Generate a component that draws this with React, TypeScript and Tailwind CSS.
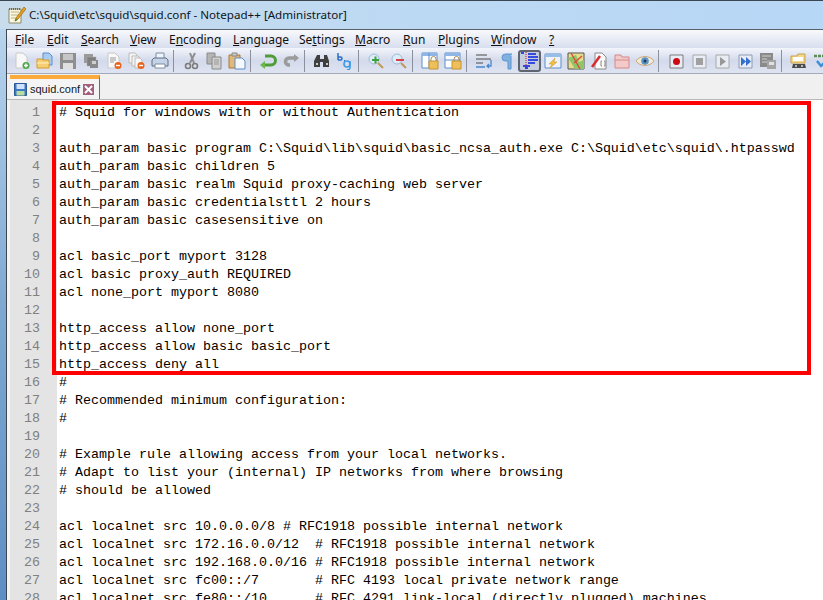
import React from 'react';

const menus: [string, string, string][] = [
  ['', 'F', 'ile'],
  ['', 'E', 'dit'],
  ['', 'S', 'earch'],
  ['', 'V', 'iew'],
  ['E', 'n', 'coding'],
  ['', 'L', 'anguage'],
  ['Se', 't', 'tings'],
  ['', 'M', 'acro'],
  ['', 'R', 'un'],
  ['', 'P', 'lugins'],
  ['', 'W', 'indow'],
  ['', '?', ''],
];

const menuWidths = [
  'w-[32px]', 'w-[34px]', 'w-[49px]', 'w-[39px]', 'w-[64px]', 'w-[66px]',
  'w-[56px]', 'w-[48px]', 'w-[35px]', 'w-[53px]', 'w-[58px]', 'w-[16px]',
];

const lines = [
  '# Squid for windows with or without Authentication',
  '',
  'auth_param basic program C:\\Squid\\lib\\squid\\basic_ncsa_auth.exe C:\\Squid\\etc\\squid\\.htpasswd',
  'auth_param basic children 5',
  'auth_param basic realm Squid proxy-caching web server',
  'auth_param basic credentialsttl 2 hours',
  'auth_param basic casesensitive on',
  '',
  'acl basic_port myport 3128',
  'acl basic proxy_auth REQUIRED',
  'acl none_port myport 8080',
  '',
  'http_access allow none_port',
  'http_access allow basic basic_port',
  'http_access deny all',
  '#',
  '# Recommended minimum configuration:',
  '#',
  '',
  '# Example rule allowing access from your local networks.',
  '# Adapt to list your (internal) IP networks from where browsing',
  '# should be allowed',
  '',
  'acl localnet src 10.0.0.0/8 # RFC1918 possible internal network',
  'acl localnet src 172.16.0.0/12  # RFC1918 possible internal network',
  'acl localnet src 192.168.0.0/16 # RFC1918 possible internal network',
  'acl localnet src fc00::/7       # RFC 4193 local private network range',
  'acl localnet src fe80::/10      # RFC 4291 link-local (directly plugged) machines',
];

const Ico = ({ children }: { children: React.ReactNode }) => (
  <div className="w-[23px] h-[22px] flex items-center justify-center shrink-0">
    <svg width="18" height="18" viewBox="0 0 18 18" fill="none">{children}</svg>
  </div>
);

const Sep = () => <div className="ml-[2px] mr-[5px] w-px h-[22px] bg-[#8b919c] shrink-0" />;

const Page = () => <path d="M3 1h7l4 4v11H3z" fill="#f8f8f8" stroke="#c8c8c8" />;
const Minus = () => (
  <>
    <circle cx="13" cy="13.5" r="3.5" fill="#e8641c" />
    <path d="M11 13.5h4" stroke="#fff" strokeWidth="1.4" />
  </>
);

const Toolbar = () => (
  <div className="h-[26px] flex items-center pl-[3px] bg-gradient-to-b from-[#f3f5fb] via-[#d3daeb] to-[#dfe4f2] border-b border-[#a3abbb] shrink-0">
    {/* new */}
    <Ico>
      <Page />
      <circle cx="13" cy="13.5" r="3.5" fill="#4ea64a" />
      <path d="M11 13.5h4M13 11.5v4" stroke="#fff" strokeWidth="1.3" />
    </Ico>
    {/* open */}
    <Ico>
      <path d="M7 1h6l3 3v9H7z" fill="#a9cdf0" stroke="#5b8ec8" />
      <path d="M1 7h5l1 1h6v8H1z" fill="#f6cf72" stroke="#d99a2e" />
      <path d="M1 11h12" stroke="#fff1c4" />
    </Ico>
    {/* save */}
    <Ico>
      <path d="M1 1h16v16H1z" fill="#8f8f8f" />
      <path d="M4 2h10v6H4z" fill="#c6c6c6" />
      <path d="M4 11h10v6H4z" fill="#e0e0e0" />
    </Ico>
    {/* save all */}
    <Ico>
      <path d="M2 2h9v9H2z" fill="#9a9a9a" />
      <path d="M5 5h9v9H5z" fill="#7f7f7f" stroke="#aaa" strokeWidth="0.5" />
      <path d="M8 8h8v8H8z" fill="#8a8a8a" />
      <path d="M10 9h4v3h-4z" fill="#d0d0d0" />
    </Ico>
    {/* close */}
    <Ico>
      <Page />
      <path d="M5 6h6M5 8h6M5 10h4" stroke="#999" />
      <Minus />
    </Ico>
    {/* close all */}
    <Ico>
      <path d="M1 1h6l2 2v8H1z" fill="#f4f4f4" stroke="#bbb" />
      <path d="M4 4h6l2 2v8H4z" fill="#f4f4f4" stroke="#bbb" />
      <path d="M7 6h5l2 2v8H7z" fill="#f8f8f8" stroke="#bbb" />
      <Minus />
    </Ico>
    {/* print */}
    <Ico>
      <path d="M5 1h8v6H5z" fill="#eef4fb" stroke="#7d8ea6" />
      <path d="M1 8l2-2h12l2 2v6H1z" fill="#c4d3e6" stroke="#5f6f86" />
      <path d="M4 12h10v4H4z" fill="#fff" stroke="#7d8ea6" />
    </Ico>
    <Sep />
    {/* cut */}
    <Ico>
      <path d="M12 1L7 11M7 1l4 10" stroke="#8f8f8f" strokeWidth="2" transform="translate(1 0)" />
      <circle cx="6" cy="14" r="2.5" stroke="#7c7c7c" strokeWidth="1.6" />
      <circle cx="13" cy="14" r="2.5" stroke="#7c7c7c" strokeWidth="1.6" />
    </Ico>
    {/* copy */}
    <Ico>
      <path d="M2 1h8v11H2z" fill="#b5b5b5" stroke="#8a8a8a" />
      <path d="M7 5h9v12H7z" fill="#cfcfcf" stroke="#8a8a8a" />
      <path d="M9 8h5M9 10h5M9 12h5" stroke="#9a9a9a" />
    </Ico>
    {/* paste */}
    <Ico>
      <path d="M1 3h11v13H1z" fill="#e2b778" stroke="#a97b3a" />
      <path d="M4 1h5v3H4z" fill="#c8c8c8" stroke="#888" />
      <path d="M7 6h7l3 3v8H7z" fill="#f4f8fd" stroke="#5b8ec8" />
    </Ico>
    <Sep />
    {/* undo */}
    <Ico>
      <path d="M6 4h6a3.500 3.500 0 0 1 0 9H4" stroke="#4f9c38" strokeWidth="3" />
      <path d="M1 13l5-4v8z" fill="#6ab84a" />
    </Ico>
    {/* redo */}
    <Ico>
      <path d="M15 6H7a3.500 3.500 0 0 0 0 7h1" stroke="#9b9b9b" strokeWidth="3.500" />
      <path d="M17 6l-5-4v8z" fill="#9b9b9b" />
    </Ico>
    <Sep />
    {/* find */}
    <Ico>
      <path d="M4 3h3v4h4V3h3l2 6v6h-6V10H7v5H1V9z" fill="#3f3f3f" />
      <path d="M3 11h2v2H3zM13 11h2v2h-2z" fill="#c9c9c9" />
    </Ico>
    {/* replace */}
    <Ico>
      <path d="M2 1v7M2 5h2.500a1.500 1.500 0 0 1 0 3H2" stroke="#2a6fc4" strokeWidth="1.500" />
      <path d="M8 8l2 2" stroke="#2a6fc4" />
      <circle cx="11" cy="12" r="3" stroke="#3d9be8" strokeWidth="1.600" />
      <path d="M14 9v7a2 2 0 0 1-3 1.500" stroke="#3d9be8" strokeWidth="1.500" />
    </Ico>
    <Sep />
    {/* zoom in */}
    <Ico>
      <circle cx="7" cy="7" r="5" fill="#dcecf8" stroke="#9cbcd8" />
      <path d="M11 11l5 5" stroke="#c09858" strokeWidth="2" />
      <path d="M5 8h7M8.500 4.500v7" stroke="#3fa040" strokeWidth="2" />
    </Ico>
    {/* zoom out */}
    <Ico>
      <circle cx="7" cy="7" r="5" fill="#dcecf8" stroke="#9cbcd8" />
      <path d="M11 11l5 5" stroke="#c09858" strokeWidth="2" />
      <path d="M6 8h8" stroke="#d8404a" strokeWidth="2" />
    </Ico>
    <Sep />
    {/* sync vertical */}
    <Ico>
      <path d="M1 1h15v15H1z" fill="#fff" stroke="#5b8ec8" />
      <path d="M1 1h15v3H1z" fill="#8fb6e6" />
      <path d="M8 1v15" stroke="#5b8ec8" />
      <path d="M8 9h9v8H8z" fill="#eec05c" stroke="#c8922c" />
      <path d="M10 9V7a2.500 2.500 0 0 1 5 0v2" stroke="#a88a50" />
    </Ico>
    {/* sync horizontal */}
    <Ico>
      <path d="M1 1h15v15H1z" fill="#fff" stroke="#5b8ec8" />
      <path d="M1 1h15v3H1z" fill="#8fb6e6" />
      <path d="M1 8h15" stroke="#5b8ec8" />
      <path d="M8 9h9v8H8z" fill="#eec05c" stroke="#c8922c" />
      <path d="M10 9V7a2.500 2.500 0 0 1 5 0v2" stroke="#a88a50" />
    </Ico>
    <Sep />
    {/* word wrap */}
    <Ico>
      <path d="M1 3h11M1 7h15M1 11h7" stroke="#4a4a4a" strokeWidth="1.200" />
      <path d="M1 15h9" stroke="#6a9ed8" strokeWidth="2" />
      <path d="M16 8v6h-4M14 12l-2 2 2 2" stroke="#4a86cc" strokeWidth="1.300" />
    </Ico>
    {/* all chars */}
    <Ico>
      <path d="M14 2H7.500a3.500 3.500 0 0 0 0 7H10V17h3V4" fill="#7fb0e0" stroke="#5c94d0" />
    </Ico>
    {/* indent guide, pressed */}
    <div className="w-[23px] h-[22px] flex items-center justify-center rounded-[3px] border-2 border-[#5e6470] bg-[#c6cedd] shrink-0">
      <svg width="17" height="17" viewBox="0 0 17 17" fill="none">
        <path d="M5 0v17" stroke="#d81818" strokeDasharray="1 1" />
        <path d="M0 1h3M7 2h8M7 5h10M7 8h10M7 11h7M2 14h7M4 16h3" stroke="#0b20e0" strokeWidth="1.500" />
      </svg>
    </div>
    {/* user defined language */}
    <Ico>
      <path d="M1 2h16v14H1z" fill="#eef3fb" stroke="#5b8ec8" />
      <path d="M1 2h16v3H1z" fill="#9abde8" />
      <path d="M11 6l-6 6h3l-2 4 7-6h-3z" fill="#f0c040" stroke="#c8922c" strokeWidth="0.500" />
    </Ico>
    {/* document map */}
    <Ico>
      <path d="M1 1h16v16H1z" fill="#e7dc8c" stroke="#555" />
      <path d="M1 6l8-3 3 7 5-2v9H8z" fill="#8fc66a" />
      <path d="M4 1l9 16M7 11l8-7" stroke="#d84c3a" strokeWidth="1.400" />
    </Ico>
    {/* function list */}
    <Ico>
      <path d="M5 1h7l4 4v12H5z" fill="#fafafa" stroke="#8a8a8a" />
      <path d="M2 15L10 4" stroke="#d82c30" strokeWidth="2.500" />
      <path d="M12 9h-1v5h1M14 9h1v5h-1" stroke="#8a8a8a" />
    </Ico>
    {/* folder as workspace */}
    <Ico>
      <path d="M2 5V3h6l1 2h7v11H2z" fill="#f3c9c9" stroke="#d48a8a" />
      <path d="M2 8h14" stroke="#d48a8a" />
    </Ico>
    {/* monitoring */}
    <Ico>
      <path d="M0 9c4-6 14-6 18 0-4 6-14 6-18 0z" fill="#f0ead8" stroke="#cfa878" />
      <circle cx="9" cy="9" r="3.800" fill="#5d92c4" />
      <circle cx="9" cy="9" r="1.500" fill="#1e3c60" />
    </Ico>
    <Sep />
    {/* macro record */}
    <Ico>
      <path d="M3 3h13v13H3z" fill="#e8ecf4" stroke="#7c7c7c" />
      <circle cx="9.500" cy="9.500" r="3.500" fill="#cc0a12" />
    </Ico>
    {/* macro stop */}
    <Ico>
      <path d="M3 3h13v13H3z" fill="#e8ecf4" stroke="#a8a8a8" />
      <path d="M6 6h7v7H6z" fill="#a0a0a0" />
    </Ico>
    {/* macro play */}
    <Ico>
      <path d="M3 3h13v13H3z" fill="#e8ecf4" stroke="#a8a8a8" />
      <path d="M7 5l6 4.500-6 4.500z" fill="#989898" />
    </Ico>
    {/* macro play multiple */}
    <Ico>
      <path d="M3 3h13v13H3z" fill="#e8ecf4" stroke="#8c9cb4" />
      <path d="M5 5l5 4.500-5 4.500zM10 5l5 4.500-5 4.500z" fill="#3270d0" />
    </Ico>
    {/* macro save */}
    <Ico>
      <path d="M1 1h13v14H1z" fill="#8a8a8a" />
      <path d="M3 4h9M3 7h5M3 10h5" stroke="#cfcfcf" />
      <path d="M8 8h9v9H8z" fill="#a4a4a4" />
      <path d="M10 10h5v3h-5z" fill="#e0e0e0" />
    </Ico>
    <Sep />
    {/* file open in explorer */}
    <Ico>
      <path d="M1 4h6l1-2h7v9H1z" fill="#f5d88a" stroke="#c8a04c" />
      <path d="M3 5h10v4H3z" fill="#fff" />
      <path d="M3 12h12l1 4H2z" fill="#4a4a4a" />
      <circle cx="6" cy="14" r="1" fill="#ddd" />
      <circle cx="12" cy="14" r="1" fill="#ddd" />
    </Ico>
    {/* spell check, cut by the window edge */}
    <Ico>
      <path d="M1 4h16" stroke="#5d8c5a" strokeWidth="2.500" strokeDasharray="3 1" />
      <path d="M4 9l4 5 5-5" stroke="#3d8fd8" strokeWidth="2.500" />
    </Ico>
  </div>
);

const App = () => {
  return (
    <div className="relative w-[823px] h-[600px] overflow-hidden flex flex-col bg-[#b7d6f3] font-['Noto_Sans',sans-serif]">
      {/* title bar */}
      <div className="h-[29px] shrink-0 flex items-center pl-[8px] border-t border-[#3c4650] bg-gradient-to-r from-[#c9dcec] via-[#bcd9f3] to-[#b7d7f6]">
        <svg width="18" height="18" viewBox="0 0 18 18" fill="none">
          <path d="M1 3h12v14H1z" fill="#fbf7de" stroke="#8a8a70" />
          <path d="M3 6h8M3 9h8M3 12h8" stroke="#b9b48a" />
          <path d="M1 3h12" stroke="#6a6a55" strokeWidth="2" strokeDasharray="1 1" />
          <path d="M16 1l-8 11-1 3 3-2 8-10z" fill="#e8a020" stroke="#8a5a10" strokeWidth="0.600" />
          <path d="M6.500 15.500l1.500-3 1.500 1.500z" fill="#4a7a30" />
        </svg>
        <span className="ml-[3px] text-[11.6px] text-[#0c1620] whitespace-nowrap">
          {'C:\\Squid\\etc\\squid\\squid.conf - Notepad++ [Administrator]'}
        </span>
      </div>

      <div className="flex flex-1 min-h-0">
        {/* window frame */}
        <div className="w-[7px] shrink-0 bg-gradient-to-b from-[#b8d4ee] via-[#7da7d0] to-[#5e8fc4] border-r border-[#3e4650]" />

        <div className="flex-1 min-w-0 flex flex-col bg-[#f0f0f0]">
          {/* menu */}
          <div className="h-[19px] shrink-0 flex items-center pl-[8px] pt-[1px] border-t border-[#5a6068] bg-gradient-to-b from-[#f8f9fc] to-[#d8deee] text-[12px] text-[#101010]">
            {menus.map(([a, u, b], i) => (
              <span key={i} className={`${menuWidths[i]} shrink-0 whitespace-nowrap`}>
                {a}
                <span className="underline">{u}</span>
                {b}
              </span>
            ))}
          </div>

          <Toolbar />

          {/* tabs */}
          <div className="h-[26px] shrink-0 flex items-end pl-[3px] bg-[#f0f0f0] border-b border-[#b8b8b8]">
            <div className="w-[90px] h-[24px] flex items-center bg-[#f4f4f4] border-t-[4px] border-[#fbaa3d] border-r border-r-[#6d6d6d] pl-[4px]">
              <svg width="13" height="13" viewBox="0 0 13 13" fill="none" className="shrink-0">
                <path d="M.5.500h12v12H.5z" fill="#3f78c6" stroke="#2a5a9e" />
                <path d="M2.500 1h8v5h-8z" fill="#cfe2f7" />
                <path d="M2.500 8h8v4.500h-8z" fill="#b9dca0" />
              </svg>
              <span className="ml-[3px] font-['Liberation_Sans',sans-serif] text-[11px] leading-none text-[#10161e] whitespace-nowrap">squid.conf</span>
              <div className="ml-[3px] w-[11px] h-[11px] flex items-center justify-center bg-[#a0607e] shrink-0">
                <svg width="9" height="9" viewBox="0 0 9 9" fill="none">
                  <path d="M1 1l7 7M8 1L1 8" stroke="#fff" strokeWidth="2" />
                </svg>
              </div>
            </div>
          </div>

          {/* editor */}
          <div className="flex-1 min-h-0 flex bg-white border-l-[3px] border-[#f4f4f4]">
            <div className="w-[47px] shrink-0 bg-[#e4e4e4] pt-[4px] pr-[17px] text-right font-['Liberation_Mono',monospace] text-[13.33px] leading-[18px] text-[#808080]">
              {lines.map((_, i) => (
                <div key={i} className="h-[18px]">{i + 1}</div>
              ))}
            </div>
            <div className="flex-1 min-w-0 pl-[2px] pt-[4px] font-['Liberation_Mono',monospace] text-[13.33px] leading-[18px] text-black whitespace-pre">
              {lines.map((l, i) => (
                <div key={i} className="h-[18px]">{l}</div>
              ))}
            </div>
          </div>
        </div>
      </div>

      {/* red annotation drawn over the screenshot */}
      <div className="absolute left-[52px] top-[101px] w-[759px] h-[274px] border-4 border-[#ff0000]" />
    </div>
  );
};

export default App;
